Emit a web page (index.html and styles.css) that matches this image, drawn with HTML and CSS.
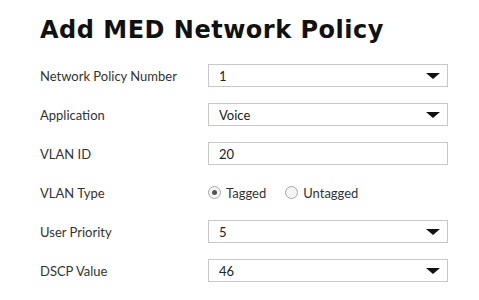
FILE: index.html
```
<!DOCTYPE html>
<html>
<head>
<meta charset="utf-8">
<link rel="stylesheet" href="styles.css">
</head>
<body>
<div class="page">
  <h1 class="title">Add MED Network Policy</h1>
  <div class="form">
    <div class="label">Network Policy Number</div>
    <div class="select"><span>1</span><span class="arrow"></span></div>

    <div class="label">Application</div>
    <div class="select"><span>Voice</span><span class="arrow"></span></div>

    <div class="label">VLAN ID</div>
    <div class="input">20</div>

    <div class="label">VLAN Type</div>
    <div class="radios">
      <span class="radio"><span class="dot checked"></span>Tagged</span>
      <span class="radio"><span class="dot"></span>Untagged</span>
    </div>

    <div class="label">User Priority</div>
    <div class="select"><span>5</span><span class="arrow"></span></div>

    <div class="label">DSCP Value</div>
    <div class="select"><span>46</span><span class="arrow"></span></div>
  </div>
</div>
</body>
</html>
```
FILE: styles.css
```
html, body {
  margin: 0;
  padding: 0;
  background: #fff;
}
.page {
  padding: 15px 0 0 40px;
  font-family: "DejaVu Sans", sans-serif;
}
.title {
  margin: 0;
  font-family: "DejaVu Sans", sans-serif;
  font-weight: bold;
  font-size: 24px;
  letter-spacing: 0.5px;
  line-height: 30px;
  color: #111;
}
.form {
  margin-top: 19px;
  display: grid;
  grid-template-columns: 168px 240px;
  grid-auto-rows: 23px;
  row-gap: 16px;
  align-items: center;
}
.label {
  font-family: "Lato", sans-serif;
  font-size: 13px;
  color: #333;
}
.select, .input {
  box-sizing: border-box;
  height: 23px;
  border: 1px solid #c8c8c8;
  background: #fff;
  display: flex;
  align-items: center;
  justify-content: space-between;
  padding: 0 7px 0 10px;
  font-family: "Lato", sans-serif;
  font-size: 13px;
  color: #222;
}
.arrow {
  width: 0;
  height: 0;
  border-left: 7px solid transparent;
  border-right: 7px solid transparent;
  border-top: 6px solid #111;
}
.radios {
  display: flex;
  align-items: center;
  gap: 19px;
  font-family: "Lato", sans-serif;
  font-size: 13px;
  color: #333;
}
.radio {
  display: flex;
  align-items: center;
  gap: 5px;
}
.dot {
  box-sizing: border-box;
  width: 13px;
  height: 13px;
  border: 1px solid #a8a8a8;
  border-radius: 50%;
  background: #f4f4f4;
  position: relative;
}
.dot.checked::after {
  content: "";
  position: absolute;
  left: 3px;
  top: 3px;
  width: 5px;
  height: 5px;
  border-radius: 50%;
  background: #555;
}
```
